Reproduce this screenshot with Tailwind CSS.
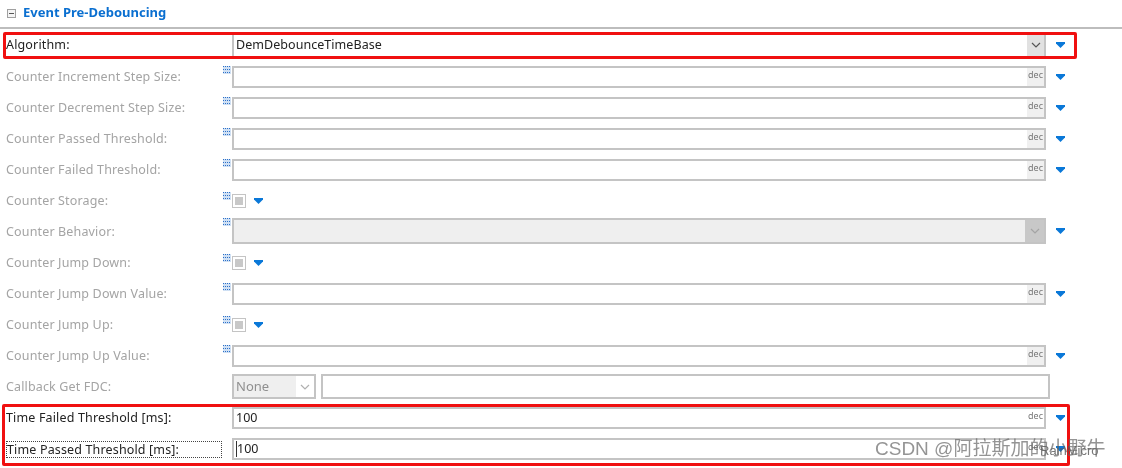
<!DOCTYPE html>
<html lang="en">
<head>
<meta charset="UTF-8">
<title>Event Pre-Debouncing</title>
<script src="https://cdn.jsdelivr.net/npm/@tailwindcss/browser@4"></script>
</head>
<body class="bg-white">
<div class="relative w-[1122px] h-[468px] overflow-hidden font-['Noto_Sans','Liberation_Sans',sans-serif] text-[12.5px] text-[#a4a4a4] blur-[0.5px]">

  <!-- section header -->
  <div class="h-[27px] flex items-start pt-[8px] pl-[7px] gap-[7px]">
    <span class="w-[9px] h-[9px] mt-[1px] border border-[#a0a0a0] bg-[#f4f4f4] flex items-center justify-center"><span class="w-[5px] h-px bg-[#555]"></span></span>
    <span class="text-[13px] leading-[9px] font-bold text-[#0a6fd0]">Event Pre-Debouncing</span>
  </div>
  <div class="h-[2px] bg-[#bdbdbd]"></div>

  <div class="flex flex-col pt-[1px]">

    <!-- Algorithm -->
    <div class="h-[31px] flex items-start pt-[4px]">
      <div class="w-[232px] pl-[6px] pt-[1px] h-[22px] flex items-center text-[#222] tracking-[0.15px]">Algorithm:</div>
      <div class="w-[814px] h-[22px] border-l-2 border-[#c4c4c4] flex items-center justify-between pl-[2px] text-[#222] tracking-[0.05px]">
        <span>DemDebounceTimeBase</span>
        <span class="w-[19px] h-[22px] bg-[#e1e1e1] border-r-2 border-[#c4c4c4] flex items-center justify-center">
          <svg width="10" height="6" viewBox="0 0 10 6" fill="none" stroke="#555" stroke-width="1.2"><path d="M1 1l4 4 4-4"/></svg>
        </span>
      </div>
      <svg class="ml-[10px] mt-[8px]" width="9" height="6" viewBox="0 0 9 6" fill="#0a78d8"><path d="M0 0h9v1.5L4.5 6 0 1.5z"/></svg>
    </div>

    <!-- Counter Increment Step Size -->
    <div class="h-[31px] flex items-start pt-[5px]">
      <div class="w-[223px] pl-[6px] pt-[1px] h-[22px] flex items-center tracking-[0.15px]">Counter Increment Step Size:</div>
      <svg class="w-[9px] h-[8px]" viewBox="0 0 9 8"><rect width="8" height="8" fill="#cfe0f4"/><path d="M0 .5h8M0 3.5h8M0 6.5h8" stroke="#2a6fc9" stroke-dasharray="1 1"/></svg>
      <div class="w-[814px] h-[22px] border-2 border-[#c4c4c4] flex justify-end">
        <span class="w-[17px] bg-[#f0f0f0] text-[9px] leading-[14px] text-center text-[#777]">dec</span>
      </div>
      <svg class="ml-[10px] mt-[8px]" width="9" height="6" viewBox="0 0 9 6" fill="#0a78d8"><path d="M0 0h9v1.5L4.5 6 0 1.5z"/></svg>
    </div>

    <!-- Counter Decrement Step Size -->
    <div class="h-[31px] flex items-start pt-[5px]">
      <div class="w-[223px] pl-[6px] pt-[1px] h-[22px] flex items-center tracking-[0.15px]">Counter Decrement Step Size:</div>
      <svg class="w-[9px] h-[8px]" viewBox="0 0 9 8"><rect width="8" height="8" fill="#cfe0f4"/><path d="M0 .5h8M0 3.5h8M0 6.5h8" stroke="#2a6fc9" stroke-dasharray="1 1"/></svg>
      <div class="w-[814px] h-[22px] border-2 border-[#c4c4c4] flex justify-end">
        <span class="w-[17px] bg-[#f0f0f0] text-[9px] leading-[14px] text-center text-[#777]">dec</span>
      </div>
      <svg class="ml-[10px] mt-[8px]" width="9" height="6" viewBox="0 0 9 6" fill="#0a78d8"><path d="M0 0h9v1.5L4.5 6 0 1.5z"/></svg>
    </div>

    <!-- Counter Passed Threshold -->
    <div class="h-[31px] flex items-start pt-[5px]">
      <div class="w-[223px] pl-[6px] pt-[1px] h-[22px] flex items-center tracking-[0.15px]">Counter Passed Threshold:</div>
      <svg class="w-[9px] h-[8px]" viewBox="0 0 9 8"><rect width="8" height="8" fill="#cfe0f4"/><path d="M0 .5h8M0 3.5h8M0 6.5h8" stroke="#2a6fc9" stroke-dasharray="1 1"/></svg>
      <div class="w-[814px] h-[22px] border-2 border-[#c4c4c4] flex justify-end">
        <span class="w-[17px] bg-[#f0f0f0] text-[9px] leading-[14px] text-center text-[#777]">dec</span>
      </div>
      <svg class="ml-[10px] mt-[8px]" width="9" height="6" viewBox="0 0 9 6" fill="#0a78d8"><path d="M0 0h9v1.5L4.5 6 0 1.5z"/></svg>
    </div>

    <!-- Counter Failed Threshold -->
    <div class="h-[31px] flex items-start pt-[5px]">
      <div class="w-[223px] pl-[6px] pt-[1px] h-[22px] flex items-center tracking-[0.15px]">Counter Failed Threshold:</div>
      <svg class="w-[9px] h-[8px]" viewBox="0 0 9 8"><rect width="8" height="8" fill="#cfe0f4"/><path d="M0 .5h8M0 3.5h8M0 6.5h8" stroke="#2a6fc9" stroke-dasharray="1 1"/></svg>
      <div class="w-[814px] h-[22px] border-2 border-[#c4c4c4] flex justify-end">
        <span class="w-[17px] bg-[#f0f0f0] text-[9px] leading-[14px] text-center text-[#777]">dec</span>
      </div>
      <svg class="ml-[10px] mt-[8px]" width="9" height="6" viewBox="0 0 9 6" fill="#0a78d8"><path d="M0 0h9v1.5L4.5 6 0 1.5z"/></svg>
    </div>

    <!-- Counter Storage -->
    <div class="h-[31px] flex items-start pt-[7px]">
      <div class="w-[223px] pl-[6px] h-[18px] flex items-center tracking-[0.15px]">Counter Storage:</div>
      <svg class="w-[9px] h-[8px]" viewBox="0 0 9 8"><rect width="8" height="8" fill="#cfe0f4"/><path d="M0 .5h8M0 3.5h8M0 6.5h8" stroke="#2a6fc9" stroke-dasharray="1 1"/></svg>
      <span class="w-[14px] h-[14px] mt-[2px] border border-[#c4c4c4] flex items-center justify-center"><span class="w-[8px] h-[8px] bg-[#c8c8c8]"></span></span>
      <svg class="ml-[8px] mt-[6px]" width="9" height="6" viewBox="0 0 9 6" fill="#0a78d8"><path d="M0 0h9v1.5L4.5 6 0 1.5z"/></svg>
    </div>

    <!-- Counter Behavior -->
    <div class="h-[31px] flex items-start pt-[2px]">
      <div class="w-[223px] pl-[6px] h-[28px] flex items-center tracking-[0.15px]">Counter Behavior:</div>
      <svg class="w-[9px] h-[8px]" viewBox="0 0 9 8"><rect width="8" height="8" fill="#cfe0f4"/><path d="M0 .5h8M0 3.5h8M0 6.5h8" stroke="#2a6fc9" stroke-dasharray="1 1"/></svg>
      <div class="w-[814px] h-[26px] border-2 border-[#c4c4c4] bg-[#efefef] flex justify-end">
        <span class="w-[19px] bg-[#c8c8c8] flex items-center justify-center">
          <svg width="10" height="6" viewBox="0 0 10 6" fill="none" stroke="#a4a4a4" stroke-width="1.2"><path d="M1 1l4 4 4-4"/></svg>
        </span>
      </div>
      <svg class="ml-[10px] mt-[10px]" width="9" height="6" viewBox="0 0 9 6" fill="#0a78d8"><path d="M0 0h9v1.5L4.5 6 0 1.5z"/></svg>
    </div>

    <!-- Counter Jump Down -->
    <div class="h-[31px] flex items-start pt-[7px]">
      <div class="w-[223px] pl-[6px] h-[18px] flex items-center tracking-[0.15px]">Counter Jump Down:</div>
      <svg class="w-[9px] h-[8px]" viewBox="0 0 9 8"><rect width="8" height="8" fill="#cfe0f4"/><path d="M0 .5h8M0 3.5h8M0 6.5h8" stroke="#2a6fc9" stroke-dasharray="1 1"/></svg>
      <span class="w-[14px] h-[14px] mt-[2px] border border-[#c4c4c4] flex items-center justify-center"><span class="w-[8px] h-[8px] bg-[#c8c8c8]"></span></span>
      <svg class="ml-[8px] mt-[6px]" width="9" height="6" viewBox="0 0 9 6" fill="#0a78d8"><path d="M0 0h9v1.5L4.5 6 0 1.5z"/></svg>
    </div>

    <!-- Counter Jump Down Value -->
    <div class="h-[31px] flex items-start pt-[5px]">
      <div class="w-[223px] pl-[6px] pt-[1px] h-[22px] flex items-center tracking-[0.15px]">Counter Jump Down Value:</div>
      <svg class="w-[9px] h-[8px]" viewBox="0 0 9 8"><rect width="8" height="8" fill="#cfe0f4"/><path d="M0 .5h8M0 3.5h8M0 6.5h8" stroke="#2a6fc9" stroke-dasharray="1 1"/></svg>
      <div class="w-[814px] h-[22px] border-2 border-[#c4c4c4] flex justify-end">
        <span class="w-[17px] bg-[#f0f0f0] text-[9px] leading-[14px] text-center text-[#777]">dec</span>
      </div>
      <svg class="ml-[10px] mt-[8px]" width="9" height="6" viewBox="0 0 9 6" fill="#0a78d8"><path d="M0 0h9v1.5L4.5 6 0 1.5z"/></svg>
    </div>

    <!-- Counter Jump Up -->
    <div class="h-[31px] flex items-start pt-[7px]">
      <div class="w-[223px] pl-[6px] h-[18px] flex items-center tracking-[0.15px]">Counter Jump Up:</div>
      <svg class="w-[9px] h-[8px]" viewBox="0 0 9 8"><rect width="8" height="8" fill="#cfe0f4"/><path d="M0 .5h8M0 3.5h8M0 6.5h8" stroke="#2a6fc9" stroke-dasharray="1 1"/></svg>
      <span class="w-[14px] h-[14px] mt-[2px] border border-[#c4c4c4] flex items-center justify-center"><span class="w-[8px] h-[8px] bg-[#c8c8c8]"></span></span>
      <svg class="ml-[8px] mt-[6px]" width="9" height="6" viewBox="0 0 9 6" fill="#0a78d8"><path d="M0 0h9v1.5L4.5 6 0 1.5z"/></svg>
    </div>

    <!-- Counter Jump Up Value -->
    <div class="h-[31px] flex items-start pt-[5px]">
      <div class="w-[223px] pl-[6px] pt-[1px] h-[22px] flex items-center tracking-[0.15px]">Counter Jump Up Value:</div>
      <svg class="w-[9px] h-[8px]" viewBox="0 0 9 8"><rect width="8" height="8" fill="#cfe0f4"/><path d="M0 .5h8M0 3.5h8M0 6.5h8" stroke="#2a6fc9" stroke-dasharray="1 1"/></svg>
      <div class="w-[814px] h-[22px] border-2 border-[#c4c4c4] flex justify-end">
        <span class="w-[17px] bg-[#f0f0f0] text-[9px] leading-[14px] text-center text-[#777]">dec</span>
      </div>
      <svg class="ml-[10px] mt-[8px]" width="9" height="6" viewBox="0 0 9 6" fill="#0a78d8"><path d="M0 0h9v1.5L4.5 6 0 1.5z"/></svg>
    </div>

    <!-- Callback Get FDC -->
    <div class="h-[31px] flex items-start pt-[3px]">
      <div class="w-[232px] pl-[6px] h-[27px] flex items-center tracking-[0.15px]">Callback Get FDC:</div>
      <div class="w-[84px] h-[25px] border-2 border-[#c4c4c4] flex items-center justify-between">
        <span class="flex-1 h-full bg-[#efefef] pl-[2px] leading-[21px] text-[13px] text-[#8f8f8f]">None</span>
        <span class="w-[18px] flex items-center justify-center">
          <svg width="10" height="6" viewBox="0 0 10 6" fill="none" stroke="#b0b0b0" stroke-width="1.2"><path d="M1 1l4 4 4-4"/></svg>
        </span>
      </div>
      <div class="ml-[5px] w-[729px] h-[25px] border-2 border-[#c4c4c4]"></div>
    </div>

    <!-- Time Failed Threshold -->
    <div class="h-[31px] flex items-start pt-[5px]">
      <div class="w-[232px] pl-[6px] pt-[1px] h-[22px] flex items-center text-[#222] tracking-[0.15px]">Time Failed Threshold [ms]:</div>
      <div class="w-[814px] h-[22px] border-2 border-[#c4c4c4] flex items-center justify-between pl-[2px] text-[#222]">
        <span>100</span>
        <span class="w-[17px] h-full text-[9px] leading-[14px] text-center text-[#777]">dec</span>
      </div>
      <svg class="ml-[10px] mt-[8px]" width="9" height="6" viewBox="0 0 9 6" fill="#0a78d8"><path d="M0 0h9v1.5L4.5 6 0 1.5z"/></svg>
    </div>

    <!-- Time Passed Threshold -->
    <div class="h-[31px] flex items-start pt-[5px]">
      <div class="w-[232px] pl-[6px] h-[22px] flex items-center text-[#222] tracking-[0.15px]">
        <span class="w-[216px] h-[17px] leading-[15px] border border-dotted border-[#444]">Time Passed Threshold [ms]:</span>
      </div>
      <div class="w-[814px] h-[22px] border-2 border-[#c4c4c4] flex items-center justify-between pl-[2px] text-[#222]">
        <span class="border-l border-[#333] leading-[16px]">100</span>
        <span class="w-[17px] h-full text-[9px] leading-[14px] text-center text-[#777]">dec</span>
      </div>
      <svg class="ml-[10px] mt-[8px]" width="9" height="6" viewBox="0 0 9 6" fill="#0a78d8"><path d="M0 0h9v1.5L4.5 6 0 1.5z"/></svg>
    </div>
  </div>

  <!-- red annotation boxes drawn over the form -->
  <div class="absolute left-[3px] top-[32px] w-[1074px] h-[27px] border-[3px] border-[#f01010] rounded-[2px]"></div>
  <div class="absolute left-[2px] top-[404px] w-[1068px] h-[62px] border-[3px] border-[#f01010] rounded-[2px]"></div>

  <!-- watermarks, two of them stacked in the source image -->
  <div class="absolute left-[1040px] top-[444px] text-[13px] leading-[14px] text-[#555]/80 font-['Liberation_Sans',sans-serif]">RainMicro</div>
  <div class="absolute left-[875px] top-[438px] text-[19px] leading-[22px] text-[#666]/70 font-['Liberation_Sans','Noto_Sans_CJK_SC',sans-serif]">CSDN @阿拉斯加的小野牛</div>
</div>
</body>
</html>
